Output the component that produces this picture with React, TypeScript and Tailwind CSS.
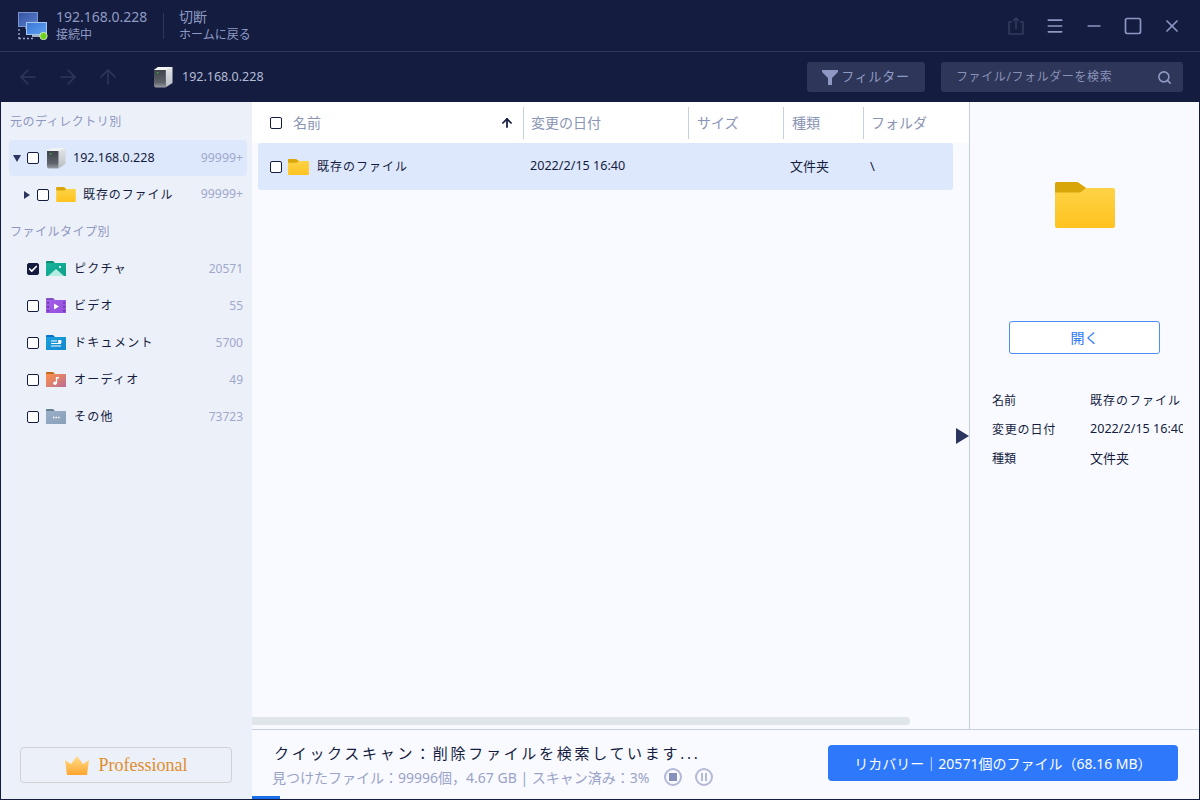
import { ArrowLeft, ArrowRight, ArrowUp, Check, Menu, Minus, Search, Square, X } from "lucide-react";

const TYPES = [
  { label: "ピクチャ", count: "20571", checked: true, kind: "picture" },
  { label: "ビデオ", count: "55", checked: false, kind: "video" },
  { label: "ドキュメント", count: "5700", checked: false, kind: "doc" },
  { label: "オーディオ", count: "49", checked: false, kind: "audio" },
  { label: "その他", count: "73723", checked: false, kind: "other" },
];

function Checkbox({ checked = false }: { checked?: boolean }) {
  return (
    <span className={`flex h-3 w-3 shrink-0 items-center justify-center rounded-[2px] border border-[#141c3f] ${checked ? "bg-[#141c3f]" : "bg-white"}`}>
      {checked && <Check className="h-2.5 w-2.5 text-white" strokeWidth={4} />}
    </span>
  );
}

function FolderIcon({ className }: { className: string }) {
  return (
    <svg viewBox="0 0 60 46" className={className}>
      <defs>
        <linearGradient id="fold" x1="0" y1="0" x2="0" y2="1">
          <stop offset="0" stopColor="#fdd54c" />
          <stop offset="1" stopColor="#ffc31f" />
        </linearGradient>
      </defs>
      <path d="M2 0h19q2 0 3 1l7 5h27q2 0 2 2v36q0 2-2 2H2q-2 0-2-2V2q0-2 2-2z" fill="url(#fold)" />
      <path d="M2 0h19q2 0 3 1l7 5-5 4q-1 .5-3 .5H0V2q0-2 2-2z" fill="#d9a60a" />
    </svg>
  );
}

function ServerIcon() {
  return (
    <svg viewBox="0 0 20 22" className="h-[22px] w-5 shrink-0">
      <defs>
        <linearGradient id="srv-front" x1="0" y1="0" x2="0" y2="1">
          <stop offset="0" stopColor="#3f434a" />
          <stop offset="0.7" stopColor="#5d6168" />
          <stop offset="1" stopColor="#9a9ea4" />
        </linearGradient>
        <linearGradient id="srv-side" x1="0" y1="0" x2="0" y2="1">
          <stop offset="0" stopColor="#e4e6e8" />
          <stop offset="1" stopColor="#b9bdc2" />
        </linearGradient>
      </defs>
      <path d="M1 4 5 1h14.5v16l-7 4.5V4z" fill="url(#srv-side)" />
      <path d="M1 4 5 1h14.5l-7 3z" fill="#f2f3f4" />
      <path d="M1 4h11.5v17.5H3q-2 0-2-2z" fill="url(#srv-front)" />
      <rect x="4" y="6" width="1.3" height="1.3" fill="#37c24a" />
    </svg>
  );
}

function TypeIcon({ kind }: { kind: string }) {
  const colors: Record<string, [string, string, string]> = {
    picture: ["#0d8a72", "#19b39a", "#0fa08c"],
    video: ["#7f4fc4", "#a45ee8", "#9150dc"],
    doc: ["#0a6fc6", "#1aa0dc", "#1288d0"],
    audio: ["#bd6a1c", "#ff9148", "#b96e96"],
    other: ["#64808f", "#9ab0c8", "#8aa0b8"],
  };
  const [tab, top, bottom] = colors[kind];
  const id = `type-${kind}`;
  return (
    <svg viewBox="0 0 20 15" className="h-[15px] w-5 shrink-0">
      <defs>
        <linearGradient id={id} x1="0" y1="0" x2="1" y2="1">
          <stop offset="0" stopColor={top} />
          <stop offset="1" stopColor={bottom} />
        </linearGradient>
      </defs>
      <path d="M0 1q0-1 1-1h6l2 2h11v13H0z" fill={tab} />
      <rect x="0" y="2" width="20" height="13" fill={`url(#${id})`} />
      {kind === "picture" && (
        <>
          <path d="M2 15l8-7 8 7z" fill="#b5eee0" />
          <rect x="13" y="5" width="2" height="2" fill="#d5f5ec" />
        </>
      )}
      {kind === "video" && (
        <>
          <path d="M8 5.5l5 3-5 3z" fill="#fff" />
          <path d="M2 4v1.5M2 8v1.5M2 12v1.5M18 4v1.5M18 8v1.5M18 12v1.5" stroke="#54288e" strokeWidth="1.5" />
        </>
      )}
      {kind === "doc" && (
        <path d="M5 6h6M5 8.5h10M5 11h10M12.5 5.5h2.5v2h-2.5z" stroke="#fff" strokeWidth="1" fill="#fff" />
      )}
      {kind === "audio" && (
        <>
          <path d="M10.5 5v6" stroke="#fff" strokeWidth="1.3" />
          <path d="M10.5 5h2.5v1.5h-2.5z" fill="#fff" />
          <circle cx="9" cy="11.2" r="1.8" fill="#fff" />
        </>
      )}
      {kind === "other" && <path d="M7 8.5h1.5M9.5 8.5H11M12 8.5h1.5" stroke="#fff" strokeWidth="1.5" />}
    </svg>
  );
}

function ConnectIcon() {
  return (
    <svg viewBox="0 0 30 28" className="h-7 w-[30px] shrink-0">
      <defs>
        <linearGradient id="mon-back" x1="0" y1="0" x2="1" y2="1">
          <stop offset="0" stopColor="#34539f" />
          <stop offset="1" stopColor="#5b7fd0" />
        </linearGradient>
        <linearGradient id="mon-front" x1="0" y1="0" x2="1" y2="1">
          <stop offset="0" stopColor="#3a76d8" />
          <stop offset="1" stopColor="#5fa2f0" />
        </linearGradient>
      </defs>
      <rect x="0.5" y="0.5" width="19" height="14" fill="url(#mon-back)" stroke="#7a94cf" />
      <path d="M7 15h5v2H7z" fill="#6f7aa4" />
      <path d="M1 17v2M1 21v2M1 25v1.5h2M5 26.5h2M9 26.5h2M13 26.5h2" stroke="#9aa6cc" strokeWidth="1.4" fill="none" />
      <rect x="8.5" y="10.5" width="20" height="12" fill="url(#mon-front)" stroke="#a7c6ee" />
      <path d="M14 23h8v2h-8z" fill="#a5afcc" />
      <circle cx="25.5" cy="24" r="3.7" fill="#6fd21c" stroke="#e7f3e0" strokeWidth="0.8" />
    </svg>
  );
}

function Crown() {
  return (
    <svg viewBox="0 0 24 19" className="h-[19px] w-6 shrink-0">
      <defs>
        <linearGradient id="crown" x1="0" y1="0" x2="0" y2="1">
          <stop offset="0" stopColor="#ffe08c" />
          <stop offset="1" stopColor="#ffa52e" />
        </linearGradient>
      </defs>
      <path d="M0 4l6 4 6-8 6 8 6-4-2 15H2z" fill="url(#crown)" />
    </svg>
  );
}

export default function App() {
  return (
    <div className="flex h-[800px] w-[1200px] flex-col overflow-hidden bg-[#141c3f] font-['Noto_Sans','Noto_Sans_CJK_JP',sans-serif]">
      {/* title bar */}
      <div className="flex h-[52px] shrink-0 items-center border-b border-[#2f3757] pl-[18px] pr-[18px]">
        <ConnectIcon />
        <div className="ml-[8px] w-[107px]">
          <div className="text-[14px] leading-[18px] text-[#8f9bc4]">192.168.0.228</div>
          <div className="text-[12px] leading-[18px] text-[#8f9bc4]">接続中</div>
        </div>
        <div className="h-[26px] w-px bg-[#2f3757]" />
        <div className="ml-[15px]">
          <div className="text-[14px] leading-[18px] text-[#8f9bc4]">切断</div>
          <div className="text-[12px] leading-[18px] text-[#8f9bc4]">ホームに戻る</div>
        </div>
        <div className="ml-auto flex items-center gap-[19px] text-[#8f97c4]">
          <svg viewBox="0 0 20 20" className="h-5 w-5 text-[#333c5e]" fill="none" stroke="currentColor" strokeWidth="1.5">
            <path d="M6 6H3v12h14V6h-3M10 13V2M7 5l3-3 3 3" />
          </svg>
          <Menu className="h-5 w-5" strokeWidth={2} />
          <Minus className="h-5 w-5" strokeWidth={2} />
          <Square className="h-5 w-5" strokeWidth={2} />
          <X className="h-5 w-5" strokeWidth={2} />
        </div>
      </div>

      {/* toolbar */}
      <div className="flex h-[50px] shrink-0 items-center pl-[16px] pr-[17px]">
        <div className="flex items-center gap-[16px] text-[#2f3859]">
          <ArrowLeft className="h-6 w-6" strokeWidth={1.6} />
          <ArrowRight className="h-6 w-6" strokeWidth={1.6} />
          <ArrowUp className="h-6 w-6" strokeWidth={1.6} />
        </div>
        <div className="ml-[33px]"><ServerIcon /></div>
        <span className="ml-[9px] text-[12.5px] text-[#b3bcd6]">192.168.0.228</span>
        <div className="ml-auto flex h-[30px] w-[118px] items-center justify-center gap-[3px] rounded-[3px] bg-[#2e3659] text-[13px] tracking-[0.8px] text-[#8f9ac4]">
          <svg viewBox="0 0 16 15" className="h-[15px] w-4 fill-[#8f97c4]">
            <path d="M0 0h16v2l-6 6v7H6V8L0 2z" />
          </svg>
          フィルター
        </div>
        <div className="ml-4 flex h-[30px] w-[242px] items-center justify-between rounded-[3px] bg-[#2e3659] pl-[15px] pr-[11px] text-[12px] tracking-[0.6px] text-[#8891b8]">
          ファイル/フォルダーを検索
          <Search className="h-[15px] w-[15px] text-[#8f9ac4]" strokeWidth={2.5} />
        </div>
      </div>

      <div className="mb-px ml-px mr-px flex min-h-0 flex-1">
        {/* sidebar */}
        <aside className="flex w-[251px] shrink-0 flex-col bg-[#ecf0f9] pb-[16px]">
          <div className="pl-[9px] pt-[11px] text-[12px] leading-[18px] tracking-[0.5px] text-[#8e97c0]">元のディレクトリ別</div>
          <div className="ml-2 mr-[5px] mt-[9px] flex h-9 items-center rounded-[4px] bg-[#dee8fc] pl-[4px] pr-[4px]">
            <span className="h-0 w-0 border-x-[4px] border-t-[7px] border-x-transparent border-t-[#2b3560]" />
            <span className="ml-[6px]"><Checkbox /></span>
            <span className="ml-[7px]"><ServerIcon /></span>
            <span className="ml-[7px] text-[12.5px] text-[#141c3f]">192.168.0.228</span>
            <span className="ml-auto text-[12.3px] text-[#a0a8cc]">99999+</span>
          </div>
          <div className="ml-[23px] mr-[9px] flex h-[37px] items-center">
            <span className="h-0 w-0 border-y-[4px] border-l-[6px] border-y-transparent border-l-[#2b3560]" />
            <span className="ml-[7px]"><Checkbox /></span>
            <span className="ml-[7px]"><FolderIcon className="h-[15px] w-5" /></span>
            <span className="ml-[7px] text-[12px] tracking-[0.9px] text-[#141c3f]">既存のファイル</span>
            <span className="ml-auto text-[12.3px] text-[#a0a8cc]">99999+</span>
          </div>
          <div className="pl-[9px] pt-[10px] text-[12px] leading-[18px] tracking-[0.5px] text-[#8e97c0]">ファイルタイプ別</div>
          <div className="mt-[9px] flex flex-col">
            {TYPES.map((t) => (
              <div key={t.label} className="flex h-[37px] items-center pl-[26px] pr-[9px]">
                <Checkbox checked={t.checked} />
                <span className="ml-[7px]"><TypeIcon kind={t.kind} /></span>
                <span className="ml-[8px] text-[12px] tracking-[1.3px] text-[#141c3f]">{t.label}</span>
                <span className="ml-auto text-[12px] text-[#a0a8cc]">{t.count}</span>
              </div>
            ))}
          </div>
          <div className="ml-[19px] mr-[20px] mt-auto flex h-9 items-center justify-center gap-[10px] rounded-[4px] border border-[#d0d2d6] font-['Liberation_Serif',serif] text-[18px] text-[#e08e2d]">
            <Crown />
            Professional
          </div>
        </aside>

        {/* main */}
        <main className="flex min-w-0 flex-1 flex-col bg-[#f9faff]">
          <div className="flex min-h-0 flex-1">
            <div className="flex w-[717px] shrink-0 flex-col">
              <div className="grid h-[41px] shrink-0 grid-cols-[271px_165px_95px_80px_106px] items-center bg-white text-[14px] text-[#8a94b4]">
                <div className="flex h-full items-center pl-[18px] pr-[9px]">
                  <Checkbox />
                  <span className="ml-[11px]">名前</span>
                  <ArrowUp className="ml-auto h-3.5 w-3.5 text-[#141c3f]" strokeWidth={3} />
                </div>
                <div className="flex h-8 items-center border-l border-[#c5cfdf] pl-[7px]">変更の日付</div>
                <div className="flex h-8 items-center border-l border-[#c5cfdf] pl-[8px]">サイズ</div>
                <div className="flex h-8 items-center border-l border-[#c5cfdf] pl-[8px]">種類</div>
                <div className="flex h-8 items-center border-l border-[#c5cfdf] pl-[7px]">フォルダ</div>
              </div>
              <div className="ml-[6px] mr-[16px] grid h-[47px] grid-cols-[265px_167px_93px_80px_90px] items-center rounded-[3px] bg-[#dee8fc] text-[12px] text-[#141c3f]">
                <div className="flex items-center pl-[12px]">
                  <Checkbox />
                  <span className="ml-[6px]"><FolderIcon className="h-4 w-[21px]" /></span>
                  <span className="ml-[8px] tracking-[1px]">既存のファイル</span>
                </div>
                <div className="pl-[7px] text-[12.6px]">2022/2/15 16:40</div>
                <div />
                <div className="pl-[7px] text-[13px]">文件夹</div>
                <div className="pl-[7px] text-[13px]">\</div>
              </div>
              <div className="mb-[4px] mt-auto h-2 w-[658px] rounded-r-[4px] bg-[#e0e5ec]" />
            </div>

            {/* detail panel */}
            <div className="relative flex flex-1 flex-col items-center border-l border-[#c5cfdf]">
              <FolderIcon className="mt-[80px] h-[46px] w-[60px]" />
              <div className="mt-[93px] flex h-[33px] w-[151px] items-center justify-center rounded-[3px] border border-[#4d8ef0] bg-white text-[14px] text-[#2e78fb]">開く</div>
              <div className="mt-[32px] w-full pl-[22px] pr-[16px] text-[12px] text-[#141c3f]">
                <div className="grid h-[29px] grid-cols-[98px_1fr] items-center">
                  <span>名前</span>
                  <span className="whitespace-nowrap tracking-[1px]">既存のファイル</span>
                </div>
                <div className="grid h-[29px] grid-cols-[98px_1fr] items-center">
                  <span className="tracking-[0.8px]">変更の日付</span>
                  <span className="overflow-hidden whitespace-nowrap text-[12.6px]">2022/2/15 16:40</span>
                </div>
                <div className="grid h-[29px] grid-cols-[98px_1fr] items-center">
                  <span>種類</span>
                  <span className="text-[13px]">文件夹</span>
                </div>
              </div>
              <span className="absolute left-[-14px] top-[326px] h-0 w-0 border-y-[8px] border-l-[13px] border-y-transparent border-l-[#2b3560]" />
            </div>
          </div>

          {/* status bar */}
          <div className="relative flex h-[70px] shrink-0 items-start border-t border-[#c5cfdf] pl-[20px]">
            <div className="flex-1">
              <div className="mt-[12px] pl-[2px] text-[15px] leading-[22px] tracking-[2.7px] text-[#141c3f]">クイックスキャン：削除ファイルを検索しています...</div>
              <div className="mt-[3px] flex h-5 items-center text-[14px] text-[#9aa3c7]">
                見つけたファイル：99996個，4.67 GB | スキャン済み：3%
                <span className="ml-[15px] flex h-[18px] w-[18px] items-center justify-center rounded-full border-2 border-[#b3b9d6]">
                  <span className="h-2 w-2 bg-[#8790bd]" />
                </span>
                <span className="ml-[13px] flex h-[18px] w-[18px] items-center justify-center gap-[2px] rounded-full border-2 border-[#b3b9d6]">
                  <span className="h-2 w-[2px] bg-[#b3b9d6]" />
                  <span className="h-2 w-[2px] bg-[#b3b9d6]" />
                </span>
              </div>
            </div>
            <div className="mr-[21px] mt-[15px] flex h-9 w-[350px] items-center justify-center rounded-[4px] bg-[#2e78fb] text-[14px] text-white">
              リカバリー｜20571個のファイル（68.16 MB）
            </div>
            <div className="absolute bottom-0 left-0 h-[3px] w-[28px] bg-[#1a6de8]" />
          </div>
        </main>
      </div>
    </div>
  );
}
